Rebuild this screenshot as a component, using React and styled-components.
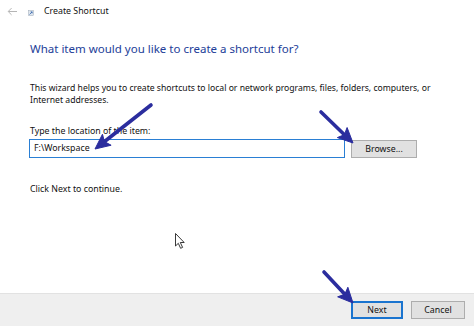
import React from 'react';
import styled, { createGlobalStyle } from 'styled-components';

const uiFont = `'Noto Sans', 'Open Sans', 'Liberation Sans', sans-serif`;

const GlobalStyle = createGlobalStyle`
  html, body {
    margin: 0;
    padding: 0;
    background: #ffffff;
  }
  body {
    font-family: ${uiFont};
    color: #000000;
  }
`;

const arrows = [
  { x1: 151, y1: 105, x2: 95, y2: 149 },
  { x1: 321, y1: 112, x2: 353, y2: 143 },
  { x1: 324, y1: 272, x2: 353, y2: 303 },
];

const Arrow = ({ x1, y1, x2, y2 }) => {
  const dx = x2 - x1;
  const dy = y2 - y1;
  const len = Math.sqrt(dx * dx + dy * dy);
  const ux = dx / len;
  const uy = dy / len;
  const headLen = 15;
  const headW = 7;
  const bx = x2 - ux * headLen;
  const by = y2 - uy * headLen;
  const px = -uy * headW;
  const py = ux * headW;
  return (
    <g fill="#2b2d9e" stroke="#2b2d9e">
      <line x1={x1} y1={y1} x2={bx + ux * 2} y2={by + uy * 2} strokeWidth="3.6" strokeLinecap="round" />
      <polygon
        points={`${x2},${y2} ${bx + px},${by + py} ${bx + ux * 3},${by + uy * 3} ${bx - px},${by - py}`}
        strokeWidth="1"
        strokeLinejoin="round"
      />
    </g>
  );
};

const App = () => {
  return (
    <>
      <GlobalStyle />
      <Window>
        <TitleBar>
          <BackIcon viewBox="0 0 12 10">
            <path d="M11 5H1.5M5 1.2L1.2 5L5 8.8" fill="none" stroke="#b4b4b4" strokeWidth="1.1" />
          </BackIcon>
          <AppIcon viewBox="0 0 8 8">
            <rect x="0.5" y="0.5" width="7" height="7" fill="#dfe6ee" stroke="#9aa7b4" strokeWidth="0.6" />
            <path d="M2 6L5.5 2.5M3.5 2.5H5.5V4.5" fill="none" stroke="#2b5fa8" strokeWidth="1" />
          </AppIcon>
          <WindowTitle>Create Shortcut</WindowTitle>
        </TitleBar>

        <Body>
          <Heading>What item would you like to create a shortcut for?</Heading>
          <Intro>
            This wizard helps you to create shortcuts to local or network programs, files, folders, computers, or
            <br />
            Internet addresses.
          </Intro>
          <FieldLabel>Type the location of the item:</FieldLabel>
          <FieldRow>
            <LocationInput>F:\Workspace</LocationInput>
            <Button $w={66}>Browse...</Button>
          </FieldRow>
          <Hint>Click Next to continue.</Hint>
        </Body>

        <Footer>
          <Button $w={52} $primary>Next</Button>
          <Button $w={54}>Cancel</Button>
        </Footer>

        <Overlay viewBox="0 0 474 326">
          {arrows.map((a, i) => (
            <Arrow key={i} {...a} />
          ))}
          <path
            d="M175.5 233.5 V246 L178.3 243.3 L180.6 248.3 L182.6 247.4 L180.3 242.5 H184.2 Z"
            fill="#ffffff"
            stroke="#222222"
            strokeWidth="0.9"
            strokeLinejoin="round"
          />
        </Overlay>
      </Window>
    </>
  );
};

export default App;

const Window = styled.div`
  position: relative;
  width: 474px;
  height: 326px;
  display: flex;
  flex-direction: column;
  overflow: hidden;
  background: #ffffff;
`;

const TitleBar = styled.div`
  height: 22px;
  display: flex;
  align-items: center;
  padding-left: 7px;
`;

const BackIcon = styled.svg`
  width: 11px;
  height: 9px;
  margin-right: 10px;
`;

const AppIcon = styled.svg`
  width: 6px;
  height: 6px;
  margin-top: 3px;
  margin-right: 10px;
`;

const WindowTitle = styled.span`
  font-size: 8.8px;
  color: #111111;
`;

const Body = styled.div`
  flex: 1;
  padding: 19px 0 0 30px;
  display: flex;
  flex-direction: column;
  align-items: flex-start;
`;

const Heading = styled.div`
  font-size: 11.5px;
  line-height: 16px;
  color: #223d98;
  margin-bottom: 25px;
`;

const Intro = styled.div`
  font-size: 8.65px;
  line-height: 12px;
  white-space: nowrap;
  color: #111111;
  margin-bottom: 19px;
`;

const FieldLabel = styled.div`
  font-size: 8.8px;
  line-height: 12px;
  color: #111111;
  margin-bottom: 2px;
`;

const FieldRow = styled.div`
  display: flex;
  align-items: center;
  gap: 6px;
  margin-left: -1px;
`;

const LocationInput = styled.div`
  width: 316px;
  height: 19px;
  box-sizing: border-box;
  border: 1px solid #2a7fd4;
  background: #ffffff;
  font-size: 8.8px;
  line-height: 17px;
  padding-left: 4px;
  color: #111111;
`;

const Button = styled.div`
  width: ${({ $w }) => $w}px;
  height: 18px;
  box-sizing: border-box;
  display: flex;
  align-items: center;
  justify-content: center;
  font-size: 8.8px;
  color: #111111;
  background: #e1e1e1;
  border: 1px solid ${({ $primary }) => ($primary ? '#1a74cf' : '#adadad')};
  box-shadow: ${({ $primary }) => ($primary ? 'inset 0 0 0 1px #1a74cf' : 'none')};
`;

const Hint = styled.div`
  font-size: 8.8px;
  line-height: 12px;
  color: #111111;
  margin-top: 25px;
`;

const Footer = styled.div`
  height: 33px;
  box-sizing: border-box;
  border-top: 1px solid #e2e2e2;
  background: #efefef;
  display: flex;
  align-items: center;
  justify-content: flex-end;
  gap: 8px;
  padding-right: 9px;
  padding-bottom: 1px;
`;

const Overlay = styled.svg`
  position: absolute;
  left: 0;
  top: 0;
  width: 474px;
  height: 326px;
  pointer-events: none;
`;
